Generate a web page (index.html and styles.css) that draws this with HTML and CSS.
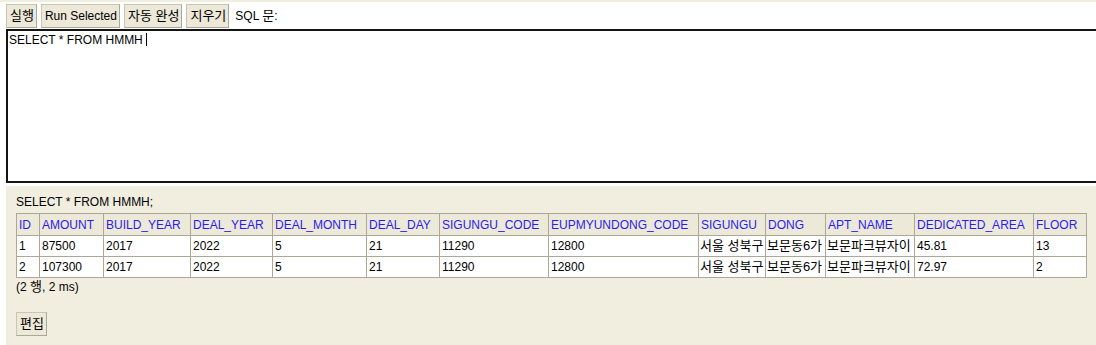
FILE: index.html
```html
<!DOCTYPE html>
<html lang="ko">
<head>
<meta charset="utf-8">
<title>H2 Console</title>
<link rel="stylesheet" href="styles.css">
</head>
<body>
<div class="topline"></div>
<div class="toolbar">
  <button class="btn"><span class="ko">실행</span></button>
  <button class="btn">Run Selected</button>
  <button class="btn"><span class="ko">자동 완성</span></button>
  <button class="btn"><span class="ko">지우기</span></button>
  <span class="label">SQL <span class="ko">문</span>:</span>
</div>
<div class="editor">SELECT * FROM HMMH <span class="caret"></span></div>
<div class="results">
  <div class="sql">SELECT * FROM HMMH;</div>
  <table class="grid">
    <colgroup>
      <col class="c-id"><col class="c-amount"><col class="c-build"><col class="c-year"><col class="c-month"><col class="c-day"><col class="c-sgcode"><col class="c-emdcode"><col class="c-sigungu"><col class="c-dong"><col class="c-apt"><col class="c-area"><col class="c-floor">
    </colgroup>
    <thead>
      <tr>
        <th>ID</th><th>AMOUNT</th><th>BUILD_YEAR</th><th>DEAL_YEAR</th><th>DEAL_MONTH</th><th>DEAL_DAY</th><th>SIGUNGU_CODE</th><th>EUPMYUNDONG_CODE</th><th>SIGUNGU</th><th>DONG</th><th>APT_NAME</th><th>DEDICATED_AREA</th><th>FLOOR</th>
      </tr>
    </thead>
    <tbody>
      <tr>
        <td>1</td><td>87500</td><td>2017</td><td>2022</td><td>5</td><td>21</td><td>11290</td><td>12800</td><td class="ko">서울 성북구</td><td class="ko">보문동6가</td><td class="ko">보문파크뷰자이</td><td>45.81</td><td>13</td>
      </tr>
      <tr>
        <td>2</td><td>107300</td><td>2017</td><td>2022</td><td>5</td><td>21</td><td>11290</td><td>12800</td><td class="ko">서울 성북구</td><td class="ko">보문동6가</td><td class="ko">보문파크뷰자이</td><td>72.97</td><td>2</td>
      </tr>
    </tbody>
  </table>
  <div class="count">(2 <span class="ko">행</span>, 2 ms)</div>
  <button class="btn edit"><span class="ko">편집</span></button>
</div>
</body>
</html>
```
FILE: styles.css
```css
html, body {
  margin: 0;
  padding: 0;
  background: #fff;
  overflow: hidden;
}
body {
  font-family: "Liberation Sans", "Noto Sans CJK KR", sans-serif;
  font-size: 12px;
  line-height: 14px;
  color: #000;
}
.ko {
  font-size: 13px;
}
.topline {
  height: 2px;
  background: #f1eee0;
}
.toolbar {
  display: flex;
  align-items: center;
  gap: 4px;
  padding: 2px 0 1px 6px;
}
.btn {
  font-family: "Liberation Sans", "Noto Sans CJK KR", sans-serif;
  font-size: 12px;
  line-height: 14px;
  height: 24px;
  padding: 0 2px 0 3px;
  background: #ece9d8;
  color: #000;
  border: 1px solid #c9c5b6;
  border-right-color: #aca899;
  border-bottom-color: #aca899;
  border-radius: 0;
  margin: 0;
}
.label {
  margin-left: 2px;
}
.editor {
  margin-left: 6px;
  width: 1096px;
  height: 146px;
  border: 2px solid #141414;
  padding: 2px 1px;
  box-sizing: content-box;
  white-space: pre;
}
.caret {
  display: inline-block;
  width: 1px;
  height: 13px;
  background: #000;
  vertical-align: -2px;
}
.results {
  margin: 3px 0 0 6px;
  padding: 8px 10px 0 10px;
  background: #f1eee0;
  height: 151px;
}
.sql {
  line-height: 16px;
  margin-bottom: 3px;
}
.grid {
  table-layout: fixed;
  border-collapse: collapse;
  width: 1070px;
}
.grid th, .grid td {
  border: 1px solid #aca899;
  text-align: left;
  white-space: nowrap;
  overflow: hidden;
  line-height: 16px;
  font-weight: normal;
}
.grid th {
  background: #ece9d8;
  color: #2a1cf0;
  padding: 3px 2px 2px 2px;
}
.grid td {
  background: #fff;
  padding: 2px 2px;
}
.grid td.ko {
  padding-left: 1px;
  padding-right: 1px;
}
.c-id { width: 23px; }
.c-amount { width: 64px; }
.c-build { width: 87px; }
.c-year { width: 82px; }
.c-month { width: 94px; }
.c-day { width: 73px; }
.c-sgcode { width: 109px; }
.c-emdcode { width: 150px; }
.c-sigungu { width: 67px; }
.c-dong { width: 60px; }
.c-apt { width: 89px; }
.c-area { width: 119px; }
.c-floor { width: 53px; }
.count {
  margin-top: 2px;
  line-height: 14px;
}
.edit {
  margin-top: 18px;
}
```
